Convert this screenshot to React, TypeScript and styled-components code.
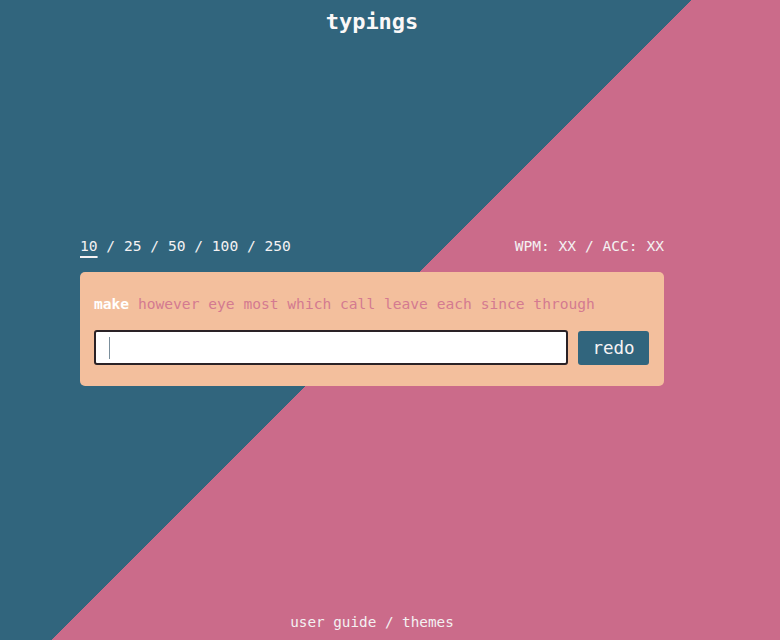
import styled, { createGlobalStyle } from 'styled-components';

const teal = '#31657d';
const pink = '#cb6b8a';
const peach = '#f3bf9d';

const GlobalStyle = createGlobalStyle`
  html, body {
    margin: 0;
    padding: 0;
  }
  body {
    font-family: 'DejaVu Sans Mono', 'Liberation Mono', monospace;
    color: #f4f1f2;
  }
`;

const words = [
  'make',
  'however',
  'eye',
  'most',
  'which',
  'call',
  'leave',
  'each',
  'since',
  'through',
];

const counts = [10, 25, 50, 100, 250];

const App = () => {
  const current = 0;
  const selected = 10;

  return (
    <Page>
      <GlobalStyle />
      <Title>typings</Title>
      <Main>
        <TopRow>
          <Counts>
            {counts.map((count, idx) => (
              <span key={`count-${count}`}>
                {idx > 0 && ' / '}
                <Count active={count === selected}>{count}</Count>
              </span>
            ))}
          </Counts>
          <Stats>WPM: XX / ACC: XX</Stats>
        </TopRow>
        <Card>
          <WordLine>
            {words.map((word, idx) => (
              <Word key={`word-${idx}`} current={idx === current}>
                {word}
              </Word>
            ))}
          </WordLine>
          <InputRow>
            <InputWrapper>
              <TypeInput />
              <Caret />
            </InputWrapper>
            <RedoButton>redo</RedoButton>
          </InputRow>
        </Card>
      </Main>
      <Footer>user guide / themes</Footer>
    </Page>
  );
};

export default App;

const Page = styled.div`
  box-sizing: border-box;
  height: 100vh;
  min-height: 640px;
  display: flex;
  flex-direction: column;
  padding-left: 80px;
  background: linear-gradient(135deg, ${teal} 489px, ${pink} 489px);
  overflow: hidden;
`;

const Title = styled.h1`
  width: 584px;
  margin: 0;
  padding-top: 8px;
  font-size: 22px;
  line-height: 28px;
  font-weight: bold;
  text-align: center;
  color: #fbf8f8;
`;

const Main = styled.main`
  width: 584px;
  margin-top: 200px;
`;

const TopRow = styled.div`
  display: flex;
  justify-content: space-between;
  align-items: center;
  height: 20px;
  font-size: 14.6px;
  line-height: 20px;
`;

const Counts = styled.div`
  white-space: pre;
`;

const Count = styled.span<{ active: boolean }>`
  cursor: pointer;
  text-decoration: ${({ active }) => (active ? 'underline' : 'none')};
  text-decoration-thickness: 2px;
  text-underline-offset: 5px;
`;

const Stats = styled.div`
  white-space: pre;
`;

const Card = styled.section`
  margin-top: 16px;
  padding: 20px 15px 21px 14px;
  background-color: ${peach};
  border-radius: 5px;
`;

const WordLine = styled.div`
  display: flex;
  gap: 0.602em;
  font-size: 14.6px;
  line-height: 24px;
  margin-bottom: 14px;
`;

const Word = styled.span<{ current: boolean }>`
  color: ${({ current }) => (current ? '#ffffff' : '#d47a90')};
  font-weight: ${({ current }) => (current ? 'bold' : 'normal')};
`;

const InputRow = styled.div`
  display: flex;
  align-items: center;
  gap: 10px;
`;

const InputWrapper = styled.div`
  position: relative;
  flex: 1;
`;

const TypeInput = styled.input`
  box-sizing: border-box;
  display: block;
  width: 100%;
  height: 35px;
  padding: 0 13px;
  border: 2px solid #2a2226;
  border-radius: 3px;
  background: #ffffff;
  font-family: inherit;
  font-size: 16px;
  outline: none;
`;

const Caret = styled.span`
  position: absolute;
  left: 15px;
  top: 7px;
  width: 1px;
  height: 22px;
  background: #7b8f9c;
`;

const RedoButton = styled.button`
  box-sizing: border-box;
  width: 71px;
  height: 34px;
  border: none;
  border-radius: 3px;
  background-color: ${teal};
  color: #f6f3f4;
  font-family: 'DejaVu Sans Mono', 'Liberation Mono', monospace;
  font-size: 17.5px;
  cursor: pointer;
`;

const Footer = styled.footer`
  width: 584px;
  margin-top: auto;
  padding-bottom: 8px;
  font-size: 14.3px;
  line-height: 20px;
  text-align: center;
`;
